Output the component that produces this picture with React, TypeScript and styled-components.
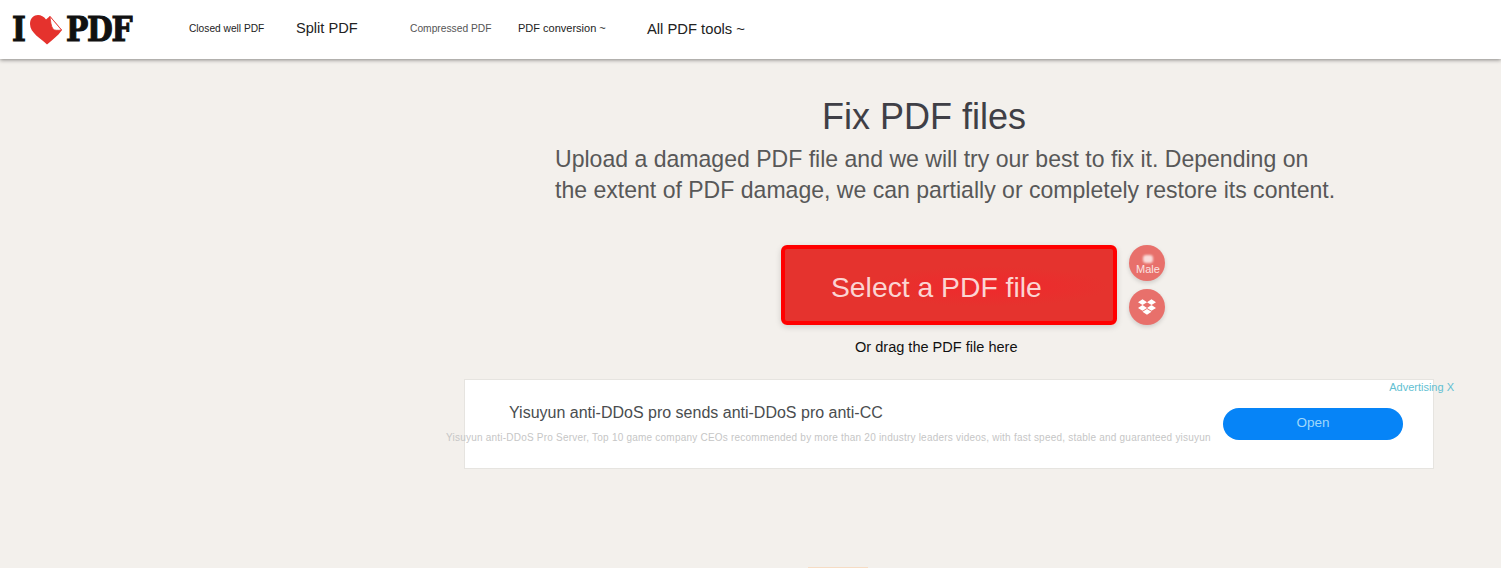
import React from 'react';
import styled, { createGlobalStyle } from 'styled-components';
import { FaDropbox } from 'react-icons/fa';

const GlobalStyle = createGlobalStyle`
  html, body {
    margin: 0;
    padding: 0;
    height: 568px;
    overflow: hidden;
    background: #f3f0ec;
    font-family: "Liberation Sans", Arial, sans-serif;
  }
`;

const Header = styled.header`
  display: flex;
  align-items: center;
  height: 59px;
  padding-left: 13px;
  background: #fff;
  box-shadow: 0 1px 4px rgba(0, 0, 0, 0.45);
`;
const Logo = styled.a`
  display: flex;
  align-items: center;
  width: 176px;
  margin-left: -1px;
  margin-right: 1px;
  font-family: "DejaVu Serif Condensed", "DejaVu Serif", serif;
  font-weight: 700;
  font-size: 33px;
  line-height: 59px;
  color: #111;
  -webkit-text-stroke: 1px #111;
`;
const LogoPdf = styled.span`
  letter-spacing: -1.2px;
`;
const LogoHeart = styled.svg`
  width: 33px;
  height: 30px;
  margin: 0 3px 0 4px;
`;
const Nav = styled.nav`
  display: flex;
  align-items: center;
  margin-top: -3px;
`;
const NavItem = styled.a<{ $size: number; $width: number; $color?: string; $drop?: number }>`
  width: ${(p) => p.$width}px;
  margin-top: ${(p) => p.$drop || 0}px;
  font-size: ${(p) => p.$size}px;
  color: ${(p) => p.$color || '#222'};
  white-space: nowrap;
`;

const Main = styled.main`
  display: flex;
  flex-direction: column;
  width: 970px;
  margin-left: 464px;
  padding-top: 37px;
`;
const Title = styled.h1`
  margin: 0;
  width: 920px;
  font-size: 36px;
  font-weight: 400;
  line-height: 42px;
  text-align: center;
  color: #3f3f46;
`;
const Intro = styled.p`
  margin: 6px 0 0 91px;
  width: 785px;
  font-size: 23.05px;
  line-height: 31px;
  color: #585858;
`;
const UploadRow = styled.div`
  display: flex;
  gap: 12px;
  margin: 39px 0 0 317px;
`;
const SelectButton = styled.button`
  width: 336px;
  height: 80px;
  padding: 5px 0 0 46px;
  box-sizing: border-box;
  border: 4px solid #ff0000;
  border-radius: 6px;
  background: radial-gradient(ellipse 120px 20px at 62% 52%, #f0282c 0%, #e5332e 100%);
  box-shadow: 0 2px 6px rgba(0, 0, 0, 0.15);
  font-family: inherit;
  font-size: 28.3px;
  color: #fbd5d3;
  text-align: left;
`;
const SideButtons = styled.div`
  display: flex;
  flex-direction: column;
  gap: 8px;
`;
const RoundButton = styled.div`
  position: relative;
  display: flex;
  align-items: center;
  justify-content: center;
  width: 36px;
  height: 36px;
  border-radius: 50%;
  background: #e8706b;
  box-shadow: 0 2px 4px rgba(0, 0, 0, 0.15);
  color: #fff;
`;
const DriveMark = styled.span`
  position: absolute;
  top: 10px;
  left: 14px;
  width: 10px;
  height: 8px;
  border-radius: 3px;
  background: #f9dcda;
  filter: blur(0.8px);
`;
const MaleLabel = styled.span`
  position: relative;
  top: 6px;
  left: 1px;
  font-size: 11px;
  color: #fbe3e1;
`;
const DragHint = styled.p`
  margin: 13px 0 0 391px;
  font-size: 14.55px;
  line-height: 18px;
  color: #111;
`;
const AdCard = styled.section`
  position: relative;
  display: flex;
  justify-content: space-between;
  align-items: center;
  box-sizing: border-box;
  height: 90px;
  margin-top: 23px;
  padding: 0 30px 0 44px;
  background: #fff;
  border: 1px solid #e6e4e0;
`;
const AdText = styled.div`
  display: flex;
  flex-direction: column;
  padding-bottom: 1px;
`;
const AdTitle = styled.h2`
  margin: 0;
  font-size: 16px;
  font-weight: 400;
  line-height: 20px;
  color: #4a4d4f;
`;
const AdBody = styled.p`
  margin: 8px 0 0 -63px;
  font-size: 10px;
  line-height: 14px;
  letter-spacing: 0.22px;
  white-space: nowrap;
  color: #c6c6c6;
`;
const OpenButton = styled.button`
  flex-shrink: 0;
  width: 180px;
  height: 32px;
  padding: 0 0 4px;
  border: 0;
  border-radius: 16px;
  background: #0684f7;
  font-family: inherit;
  font-size: 13.5px;
  color: #9fd8fb;
`;
const AdClose = styled.span`
  position: absolute;
  top: 0;
  right: -21px;
  font-size: 11px;
  line-height: 14px;
  color: #62bfd2;
`;
const BottomSliver = styled.div`
  width: 60px;
  height: 1px;
  margin: 98px 0 0 344px;
  background: #f6dcc4;
`;

const App: React.FC = () => {
  return (
    <>
      <GlobalStyle />
      <Header>
        <Logo>
          I
          <LogoHeart viewBox="0 0 33 30">
            <path
              d="M17 29.5 C11 23.500 0 18 0 9 C0 3 4 0 8 0 C11 0 14 1.500 16 4.500 L20 1 L32 15 C28 21 22 25 17 29.500 Z"
              fill="#e5322d"
            />
            <path
              d="M20 1.500 L31.500 15 C28 15.500 24 15.500 23 14 C21 11 20.500 6 20 1.500 Z"
              fill="#fff"
              stroke="#e5322d"
              strokeWidth="0.8"
            />
          </LogoHeart>
          <LogoPdf>PDF</LogoPdf>
        </Logo>
        <Nav>
          <NavItem $size={10.2} $width={107} $drop={1}>Closed well PDF</NavItem>
          <NavItem $size={14.6} $width={114} $drop={-1}>Split PDF</NavItem>
          <NavItem $size={10.25} $width={108} $color="#555" $drop={1}>Compressed PDF</NavItem>
          <NavItem $size={11} $width={129}>PDF conversion ~</NavItem>
          <NavItem $size={14.75} $width={110} $drop={2}>All PDF tools ~</NavItem>
        </Nav>
      </Header>
      <Main>
        <Title>Fix PDF files</Title>
        <Intro>
          Upload a damaged PDF file and we will try our best to fix it. Depending on the extent of PDF damage, we can
          partially or completely restore its content.
        </Intro>
        <UploadRow>
          <SelectButton>Select a PDF file</SelectButton>
          <SideButtons>
            <RoundButton>
              <DriveMark />
              <MaleLabel>Male</MaleLabel>
            </RoundButton>
            <RoundButton>
              <FaDropbox size={18} />
            </RoundButton>
          </SideButtons>
        </UploadRow>
        <DragHint>Or drag the PDF file here</DragHint>
        <AdCard>
          <AdText>
            <AdTitle>Yisuyun anti-DDoS pro sends anti-DDoS pro anti-CC</AdTitle>
            <AdBody>
              Yisuyun anti-DDoS Pro Server, Top 10 game company CEOs recommended by more than 20 industry leaders videos,
              with fast speed, stable and guaranteed yisuyun
            </AdBody>
          </AdText>
          <OpenButton>Open</OpenButton>
          <AdClose>Advertising X</AdClose>
        </AdCard>
        <BottomSliver />
      </Main>
    </>
  );
};

export default App;
